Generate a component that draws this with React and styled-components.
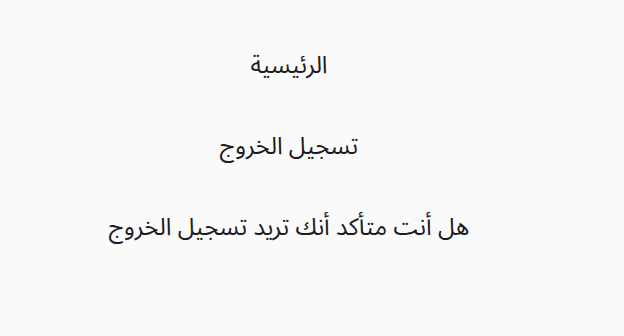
import styled, { createGlobalStyle } from 'styled-components'

const Global = createGlobalStyle`
  html, body {
    margin: 0;
    padding: 0;
    background: #fafafa;
  }
  body {
    font-family: "Noto Sans Arabic", "Noto Sans Arabic UI", "Noto Sans", sans-serif;
    color: #1c1c1c;
  }
`

const Page = styled.div`
  direction: rtl;
  display: flex;
  flex-direction: column;
  align-items: center;
  padding: 46px 46px 0 0;
  gap: 41px;
`

const Line = styled.div`
  font-size: 24px;
  line-height: 40px;
`

export default function App() {
  return (
    <>
      <Global />
      <Page>
        <Line>الرئيسية</Line>
        <Line>تسجيل الخروج</Line>
        <Line>هل أنت متأكد أنك تريد تسجيل الخروج</Line>
      </Page>
    </>
  )
}
